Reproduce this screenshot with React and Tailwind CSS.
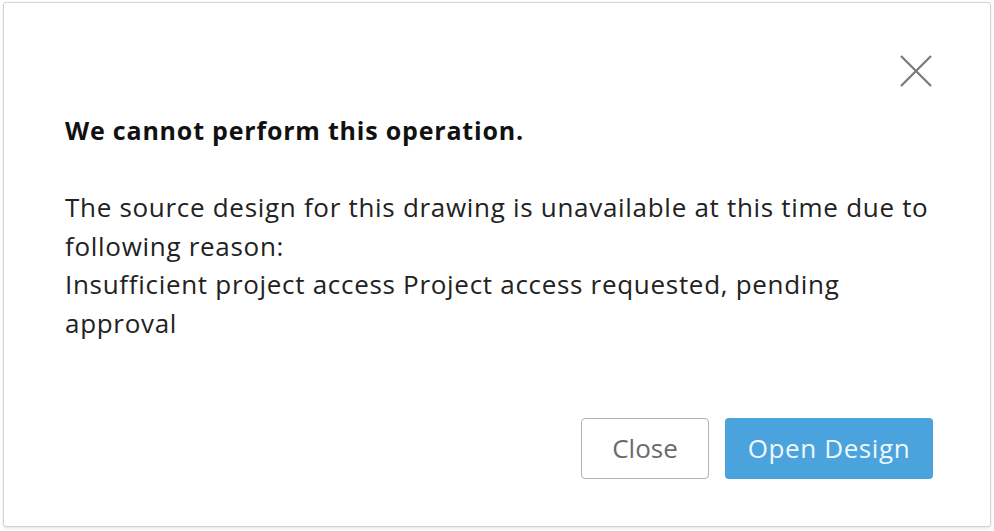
import React from "react";

function CloseIcon() {
  return (
    <svg width="34" height="34" viewBox="0 0 34 34" fill="none">
      <path d="M2 2 L32 32 M32 2 L2 32" stroke="#7a7a7a" strokeWidth="2.2" />
    </svg>
  );
}

export default function App() {
  return (
    <div className="w-[994px] h-[531px] bg-white pl-[3px] pt-[2px]" style={{ fontFamily: '"Open Sans", sans-serif' }}>
      <div className="w-[988px] h-[525px] border border-[#d4d4d4] rounded-[3px] bg-white shadow-[0_1px_3px_rgba(0,0,0,0.12)] flex flex-col">
        {/* Header */}
        <div className="flex justify-end pt-[51px] pr-[57px]">
          <button className="w-[34px] h-[34px]">
            <CloseIcon />
          </button>
        </div>

        {/* Body */}
        <div className="pl-[61px] pr-[50px]">
          <h2 className="mt-[26px] text-[25px] leading-[32px] font-bold tracking-[0.8px] text-[#111]">
            We cannot perform this operation.
          </h2>
          <p className="mt-[42px] text-[26px] leading-[38.5px] tracking-[0.7px] text-[#222]">
            The source design for this drawing is unavailable at this time due to following reason:
            <br />
            Insufficient project access Project access requested, pending approval
          </p>
        </div>

        {/* Footer */}
        <div className="mt-auto mb-[47px] flex justify-end gap-[16px] pr-[57px]">
          <button className="w-[128px] h-[61px] border border-[#b3b3b3] rounded-[4px] bg-white text-[26px] text-[#6b6b6b]">
            Close
          </button>
          <button className="w-[208px] h-[61px] rounded-[4px] bg-[#4aa3dc] text-[26px] tracking-[0.6px] text-[#eef7fd]">
            Open Design
          </button>
        </div>
      </div>
    </div>
  );
}
